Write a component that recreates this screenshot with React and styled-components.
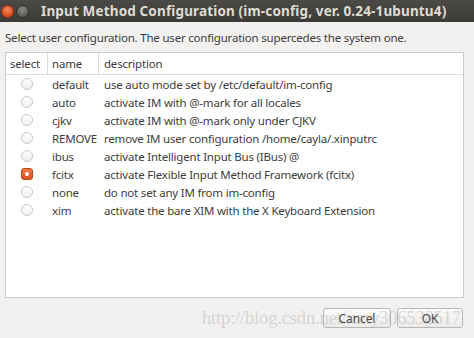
import React from 'react';
import styled, { createGlobalStyle } from 'styled-components';

const GlobalStyle = createGlobalStyle`
  html, body {
    margin: 0;
    padding: 0;
    background: #f2f1f0;
  }
  * {
    box-sizing: border-box;
  }
`;

const Window = styled.div`
  position: relative;
  width: 474px;
  height: 338px;
  display: flex;
  flex-direction: column;
  background: #f2f1f0;
  font-family: 'Noto Sans', 'Open Sans', sans-serif;
  font-size: 11.5px;
  letter-spacing: -0.2px;
  color: #3c3c3c;
  overflow: hidden;
`;

const TitleBar = styled.div`
  height: 22px;
  flex: none;
  display: flex;
  align-items: center;
  padding-left: 1px;
  background: linear-gradient(#4b4a46, #3c3b37);
`;

const WindowButton = styled.div`
  width: 13px;
  height: 13px;
  border-radius: 50%;
  margin-right: 2px;
  background: ${({ $close }) =>
    $close
      ? 'radial-gradient(circle at 50% 35%, #f28b64, #df4a16 70%)'
      : 'radial-gradient(circle at 50% 35%, #8c8a84, #5d5c57 70%)'};
  border: 1px solid ${({ $close }) => ($close ? '#8f3413' : '#2f2e2b')};
`;

const Title = styled.div`
  margin-left: 10px;
  font-weight: bold;
  font-size: 13.5px;
  letter-spacing: 0.15px;
  color: #dfdbd2;
  white-space: nowrap;
`;

const Body = styled.div`
  flex: 1;
  display: flex;
  flex-direction: column;
  padding: 0 10px 0 5px;
`;

const Prompt = styled.div`
  height: 30px;
  display: flex;
  align-items: center;
  white-space: nowrap;
`;

const TableBox = styled.div`
  height: 246px;
  background: #fff;
  border: 1px solid #cdcbc8;
`;

const Columns = styled.div`
  display: grid;
  grid-template-columns: 42px 51px 1fr;
`;

const HeaderRow = styled(Columns)`
  height: 22px;
  border-bottom: 1px solid #dedcda;
`;

const HeaderCell = styled.div`
  display: flex;
  align-items: center;
  padding-left: ${({ $pad }) => $pad}px;
  border-right: ${({ $last }) => ($last ? 'none' : '1px solid #dedcda')};
  white-space: nowrap;
`;

const Row = styled(Columns)`
  height: 18px;
  align-items: center;
  white-space: nowrap;
`;

const RadioCell = styled.div`
  display: flex;
  justify-content: center;
`;

const Radio = styled.div`
  width: 12px;
  height: 12px;
  border-radius: ${({ $checked }) => ($checked ? '3px' : '50%')};
  display: flex;
  align-items: center;
  justify-content: center;
  background: ${({ $checked }) =>
    $checked ? 'linear-gradient(#f0784a, #d9531e)' : 'linear-gradient(#ffffff, #f1f0ef)'};
  border: 1px solid ${({ $checked }) => ($checked ? '#b9461a' : '#c9c7c4')};

  &::after {
    content: '';
    display: ${({ $checked }) => ($checked ? 'block' : 'none')};
    width: 4px;
    height: 4px;
    border-radius: 50%;
    background: #fff;
  }
`;

const NameCell = styled.div`
  padding-left: 4px;
`;

const DescCell = styled.div`
  padding-left: 5px;
`;

const Footer = styled.div`
  flex: 1;
  display: flex;
  justify-content: flex-end;
  align-items: flex-start;
  padding-top: 10px;
  padding-right: 1px;
  gap: 6px;
`;

const Button = styled.button`
  width: ${({ $wide }) => ($wide ? 68 : 66)}px;
  height: 20px;
  padding: 0;
  font-family: inherit;
  font-size: 12px;
  letter-spacing: -0.1px;
  color: #3c3c3c;
  background: linear-gradient(#fbfbfa, #ecebe9);
  border: 1px solid #b9b7b3;
  border-radius: 3px;
`;

const Watermark = styled.div`
  position: absolute;
  left: 202px;
  top: 307px;
  font-family: 'Liberation Serif', serif;
  font-size: 18.6px;
  color: rgba(165, 165, 165, 0.4);
  white-space: nowrap;
  pointer-events: none;
`;

const configs = [
  ['default', 'use auto mode set by /etc/default/im-config'],
  ['auto', 'activate IM with @-mark for all locales'],
  ['cjkv', 'activate IM with @-mark only under CJKV'],
  ['REMOVE', 'remove IM user configuration /home/cayla/.xinputrc'],
  ['ibus', 'activate Intelligent Input Bus (IBus) @'],
  ['fcitx', 'activate Flexible Input Method Framework (fcitx)'],
  ['none', 'do not set any IM from im-config'],
  ['xim', 'activate the bare XIM with the X Keyboard Extension'],
];

const App = () => (
  <Window>
    <GlobalStyle />
    <TitleBar>
      <WindowButton $close />
      <WindowButton />
      <Title>Input Method Configuration (im-config, ver. 0.24-1ubuntu4)</Title>
    </TitleBar>
    <Body>
      <Prompt>Select user configuration. The user configuration supercedes the system one.</Prompt>
      <TableBox>
        <HeaderRow>
          <HeaderCell $pad={4}>select</HeaderCell>
          <HeaderCell $pad={4}>name</HeaderCell>
          <HeaderCell $pad={5} $last>description</HeaderCell>
        </HeaderRow>
        {configs.map(([name, desc]) => (
          <Row key={name}>
            <RadioCell>
              <Radio $checked={name === 'fcitx'} />
            </RadioCell>
            <NameCell>{name}</NameCell>
            <DescCell>{desc}</DescCell>
          </Row>
        ))}
      </TableBox>
      <Footer>
        <Button $wide>Cancel</Button>
        <Button>OK</Button>
      </Footer>
    </Body>
    <Watermark>http://blog.csdn.net/xmy306538517</Watermark>
  </Window>
);

export default App;
